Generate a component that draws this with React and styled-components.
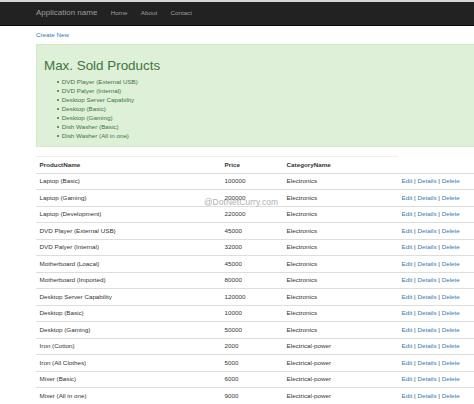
import React from 'react'
import styled, { createGlobalStyle } from 'styled-components'

const GlobalStyle = createGlobalStyle`
  html, body {
    margin: 0;
    padding: 0;
    background: #fff;
    overflow: hidden;
  }
  body {
    font-family: "Liberation Sans", Arial, sans-serif;
    font-size: 6.25px;
    line-height: 8.9px;
    color: #333;
  }
`

const Page = styled.div`
  width: 474px;
  height: 404px;
  overflow: hidden;
  position: relative;
`

const TopStrip = styled.div`
  height: 2px;
  background: #d6d6d6;
`

const Navbar = styled.nav`
  height: 23px;
  background: #222;
  border-bottom: 1px solid #080808;
  display: flex;
  align-items: center;
  padding-left: 29.3px;
`

const Brand = styled.a`
  font-size: 8px;
  color: #9d9d9d;
  padding: 0 6.7px;
  text-decoration: none;
`

const NavLink = styled.a`
  color: #9d9d9d;
  padding: 0 6.7px;
  text-decoration: none;
`

const Container = styled.div`
  padding-left: 36px;
  width: 460px;
`

const CreateLink = styled.p`
  margin: 4.5px 0 4.5px;
  a {
    color: #337ab7;
    text-decoration: none;
  }
`

const Alert = styled.div`
  background: #dff0d8;
  color: #3c763d;
  border: 0.5px solid #d6e9c6;
  padding: 5px 7px 6px;
  width: 480px;
`

const Title = styled.h2`
  font-size: 13.4px;
  font-weight: 500;
  line-height: 1.1;
  margin: 8.6px 0 4px;
`

const List = styled.ul`
  margin: 0;
  padding-left: 17.8px;
  list-style: none;
  li {
    position: relative;
    line-height: 9px;
  }
  li::before {
    content: '';
    position: absolute;
    left: -5px;
    top: 3.6px;
    width: 2px;
    height: 2px;
    border-radius: 50%;
    background: #3c763d;
  }
`

const Table = styled.table`
  margin-top: 9px;
  border-collapse: collapse;
  table-layout: fixed;
  width: 480px;
`

const Th = styled.th`
  text-align: left;
  font-weight: bold;
  padding: 3.3px 3.6px;
  border-top: ${p => (p.noTop ? 'none' : '1px solid #eee')};
  border-bottom: 1px solid #ddd;
  line-height: 8.9px;
`

const Td = styled.td`
  padding: 3.3px 3.6px;
  border-top: 1px solid #ddd;
  line-height: 8.9px;
  white-space: nowrap;
`

const Action = styled.a`
  color: #337ab7;
  text-decoration: none;
`

const Watermark = styled.div`
  position: absolute;
  left: 204px;
  top: 198px;
  font-size: 8.4px;
  color: #b0b0b0;
  letter-spacing: 0.1px;
  pointer-events: none;
`

const maxSold = [
  'DVD Player (External USB)',
  'DVD Palyer (Internal)',
  'Desktop Server Capability',
  'Desktop (Basic)',
  'Desktop (Gaming)',
  'Dish Washer (Basic)',
  'Dish Washer (All in one)',
]

const products = [
  ['Laptop (Basic)', '100000', 'Electronics'],
  ['Laptop (Gaming)', '200000', 'Electronics'],
  ['Laptop (Development)', '220000', 'Electronics'],
  ['DVD Player (External USB)', '45000', 'Electronics'],
  ['DVD Palyer (Internal)', '32000', 'Electronics'],
  ['Motherboard (Loacal)', '45000', 'Electronics'],
  ['Motherboard (Imported)', '80000', 'Electronics'],
  ['Desktop Server Capability', '120000', 'Electronics'],
  ['Desktop (Basic)', '10000', 'Electronics'],
  ['Desktop (Gaming)', '50000', 'Electronics'],
  ['Iron (Cotton)', '2000', 'Electrical-power'],
  ['Iron (All Clothes)', '5000', 'Electrical-power'],
  ['Mixer (Basic)', '6000', 'Electrical-power'],
  ['Mixer (All in one)', '9000', 'Electrical-power'],
]

export default function App() {
  return (
    <Page>
      <GlobalStyle />
      <TopStrip />
      <Navbar>
        <Brand href="#">Application name</Brand>
        <NavLink href="#">Home</NavLink>
        <NavLink href="#">About</NavLink>
        <NavLink href="#">Contact</NavLink>
      </Navbar>
      <Container>
        <CreateLink>
          <a href="#">Create New</a>
        </CreateLink>
        <Alert>
          <Title>Max. Sold Products</Title>
          <List>
            {maxSold.map(item => (
              <li key={item}>{item}</li>
            ))}
          </List>
        </Alert>
        <Table>
          <colgroup>
            <col style={{ width: 185 }} />
            <col style={{ width: 62 }} />
            <col style={{ width: 115 }} />
            <col />
          </colgroup>
          <thead>
            <tr>
              <Th>ProductName</Th>
              <Th>Price</Th>
              <Th>CategoryName</Th>
              <Th noTop></Th>
            </tr>
          </thead>
          <tbody>
            {products.map(([name, price, cat]) => (
              <tr key={name}>
                <Td>{name}</Td>
                <Td>{price}</Td>
                <Td>{cat}</Td>
                <Td>
                  <Action href="#">Edit</Action> | <Action href="#">Details</Action> |{' '}
                  <Action href="#">Delete</Action>
                </Td>
              </tr>
            ))}
          </tbody>
        </Table>
      </Container>
      <Watermark>@DotNetCurry.com</Watermark>
    </Page>
  )
}
